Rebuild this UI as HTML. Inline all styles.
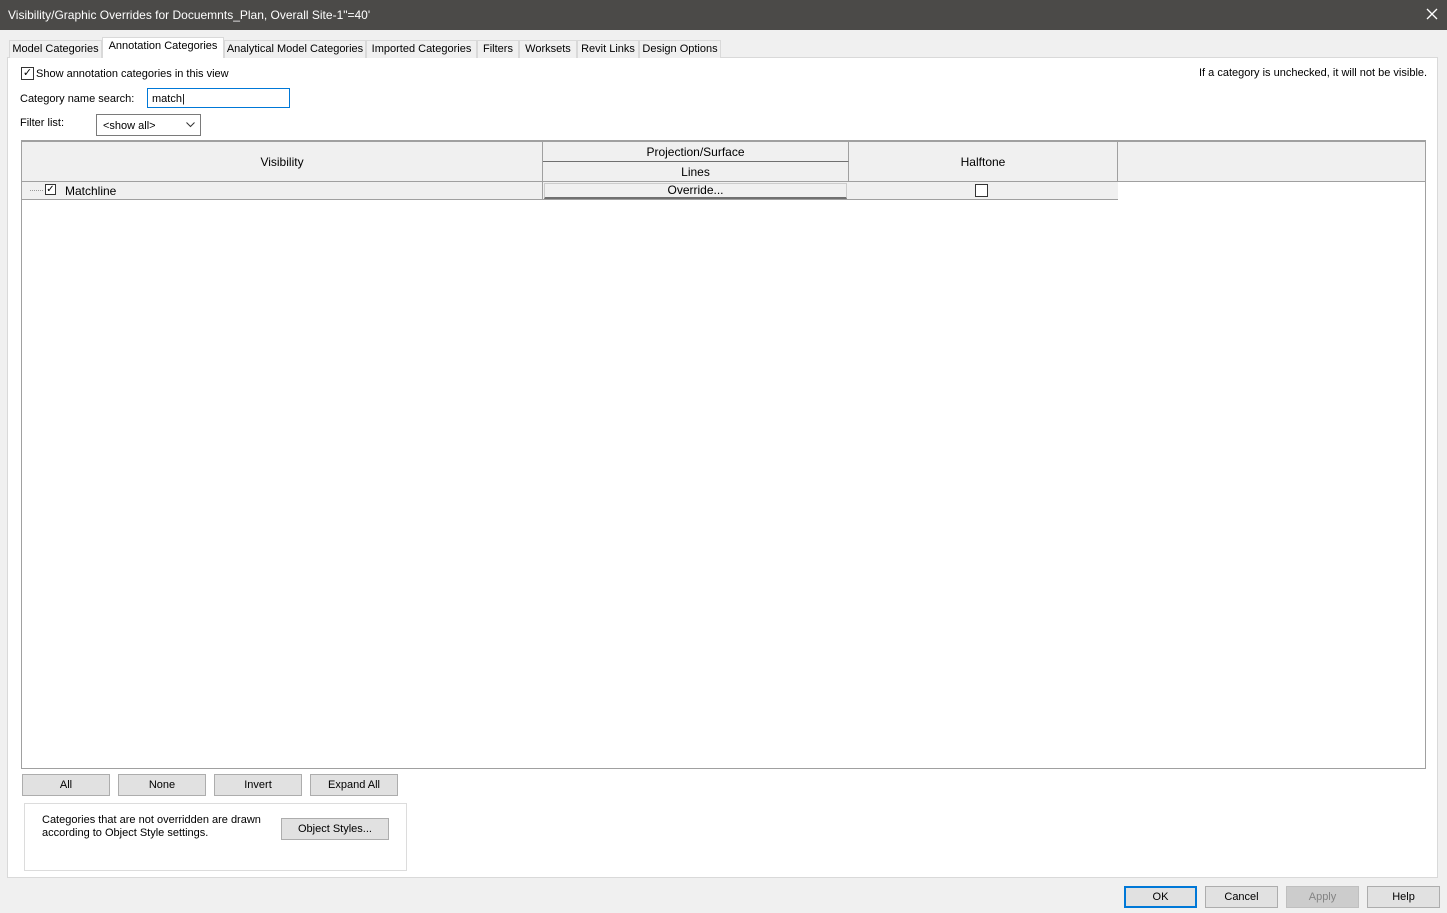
<!DOCTYPE html>
<html><head><style>
*{box-sizing:border-box;margin:0;padding:0}
body{width:1447px;height:913px;background:#f0f0f0;font-family:"Liberation Sans",sans-serif;font-size:11px;color:#000;position:relative;overflow:hidden}
.a{position:absolute}
.title{left:0;top:0;width:1447px;height:30px;background:#4b4a48;color:#fff;font-size:12px;line-height:30px;padding-left:8px}
.tab{top:40px;height:18px;border:1px solid #d9d9d9;border-bottom:none;background:#f0f0f0;line-height:17px;text-align:center;font-size:11px}
.panel{left:7px;top:57px;width:1431px;height:821px;background:#fff;border:1px solid #d9d9d9}
.btn{background:#e1e1e1;border:1px solid #adadad;text-align:center;line-height:21px;font-size:11px}
.cb{width:13px;height:13px;border:1px solid #333;background:#fff}
.hd{background:#f0f0f0;border-right:1px solid #a0a0a0;text-align:center}
</style></head><body>
<div class="a title">Visibility/Graphic Overrides for Docuemnts_Plan, Overall Site-1"=40'</div>
<svg class="a" style="left:1426px;top:8px" width="12" height="12"><path d="M1 1L11 11M11 1L1 11" stroke="#fff" stroke-width="1.3"/></svg>
<div class="a panel"></div>
<div class="a tab" style="left:9px;width:93px">Model Categories</div>
<div class="a tab" style="left:102px;width:122px;top:37px;height:21px;background:#fff;border-color:#d9d9d9">Annotation Categories</div>
<div class="a tab" style="left:224px;width:142px">Analytical Model Categories</div>
<div class="a tab" style="left:366px;width:111px">Imported Categories</div>
<div class="a tab" style="left:477px;width:42px">Filters</div>
<div class="a tab" style="left:519px;width:58px">Worksets</div>
<div class="a tab" style="left:577px;width:62px">Revit Links</div>
<div class="a tab" style="left:639px;width:82px">Design Options</div>
<div class="a cb" style="left:21px;top:67px;font-size:11px;line-height:11px;text-align:center">✓</div>
<div class="a" style="left:36px;top:68px">Show annotation categories in this view</div>
<div class="a" style="left:1199px;top:67px">If a category is unchecked, it will not be visible.</div>
<div class="a" style="left:20px;top:93px">Category name search:</div>
<div class="a" style="left:147px;top:88px;width:143px;height:20px;border:1px solid #0078d7;background:#fff;padding:4px 4px">match|</div>
<div class="a" style="left:20px;top:117px">Filter list:</div>
<div class="a" style="left:96px;top:114px;width:105px;height:22px;border:1px solid #7a7a7a;background:#fff;padding:5px 6px">&lt;show all&gt;<svg style="position:absolute;right:5px;top:7px" width="9" height="6"><path d="M0.5 0.5L4.5 4.5L8.5 0.5" stroke="#333" fill="none"/></svg></div>
<div class="a" style="left:21px;top:140px;width:1405px;height:629px;border:1px solid #a0a0a0;border-top:2px solid #a0a0a0;background:#fff"></div>
<div class="a hd" style="left:22px;top:142px;width:521px;height:40px;line-height:40px;font-size:12px;border-bottom:1px solid #a0a0a0">Visibility</div>
<div class="a hd" style="left:543px;top:142px;width:306px;height:20px;line-height:20px;font-size:12px;border-bottom:1px solid #707070">Projection/Surface</div>
<div class="a hd" style="left:543px;top:162px;width:306px;height:20px;line-height:20px;font-size:12px;border-bottom:1px solid #a0a0a0">Lines</div>
<div class="a hd" style="left:849px;top:142px;width:269px;height:40px;line-height:40px;font-size:12px;border-bottom:1px solid #a0a0a0">Halftone</div>
<div class="a" style="left:1118px;top:142px;width:307px;height:40px;background:#f0f0f0;border-bottom:1px solid #a0a0a0"></div>
<div class="a" style="left:22px;top:182px;width:1096px;height:18px;background:#f0f0f0;border-bottom:1px solid #a0a0a0"></div>
<div class="a" style="left:542px;top:182px;width:1px;height:18px;background:#a0a0a0"></div>
<div class="a" style="left:30px;top:190px;width:13px;border-top:1px dotted #999"></div>
<div class="a cb" style="left:45px;top:184px;width:11px;height:11px;font-size:10px;line-height:9px;text-align:center">✓</div>
<div class="a" style="left:65px;top:184px;font-size:12px">Matchline</div>
<div class="a" style="left:544px;top:183px;width:303px;height:16px;background:#f0f0f0;border:1px solid #ccc;border-bottom:2px solid #707070;text-align:center;font-size:12px;line-height:12px">Override...</div>
<div class="a" style="left:975px;top:184px;width:13px;height:13px;border:1px solid #333;background:#fff"></div>
<div class="a btn" style="left:22px;top:774px;width:88px;height:22px">All</div>
<div class="a btn" style="left:118px;top:774px;width:88px;height:22px">None</div>
<div class="a btn" style="left:214px;top:774px;width:88px;height:22px">Invert</div>
<div class="a btn" style="left:310px;top:774px;width:88px;height:22px">Expand All</div>
<div class="a" style="left:24px;top:803px;width:383px;height:68px;border:1px solid #dcdcdc"></div>
<div class="a" style="left:42px;top:814px;line-height:13px">Categories that are not overridden are drawn<br>according to Object Style settings.</div>
<div class="a btn" style="left:281px;top:818px;width:108px;height:22px">Object Styles...</div>
<div class="a btn" style="left:1124px;top:886px;width:73px;height:22px;border:2px solid #0078d7;line-height:19px">OK</div>
<div class="a btn" style="left:1205px;top:886px;width:73px;height:22px">Cancel</div>
<div class="a btn" style="left:1286px;top:886px;width:73px;height:22px;background:#ccc;border-color:#bfbfbf;color:#838383">Apply</div>
<div class="a btn" style="left:1367px;top:886px;width:73px;height:22px">Help</div>
</body></html>
